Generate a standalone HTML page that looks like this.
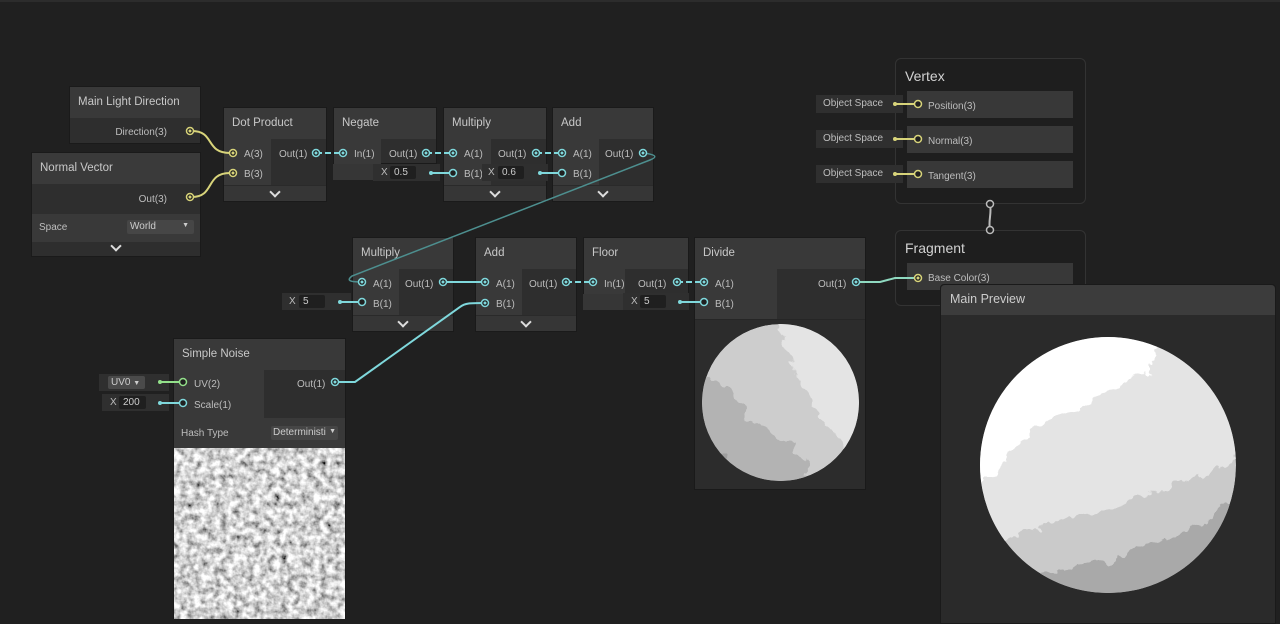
<!DOCTYPE html>
<html><head><meta charset="utf-8">
<style>
*{margin:0;padding:0;box-sizing:border-box}
body{width:1280px;height:621px;background:#202020;overflow:hidden;position:relative;font-family:"Liberation Sans",sans-serif;color:#c4c4c4}
.a{position:absolute}
.n{position:absolute;background:#2e2e2e;border:1px solid #1a1a1a}
.h{position:absolute;left:0;right:0;top:0;height:31px;background:#393939;font-size:11.5px;color:#c8c8c8;padding:9px 0 0 8px}
.ic{position:absolute;background:#393939}
.ft{position:absolute;left:0;right:0;bottom:0;height:16px;background:#363636;border-top:1px solid #2a2a2a}
.t{position:absolute;font-size:10px;color:#bdbdbd;white-space:nowrap}
.ch{position:absolute;width:8px;height:8px;border-right:2px solid #ddd;border-bottom:2px solid #ddd;transform:rotate(45deg)}
.fld{position:absolute;background:#2f2f2f;height:17px;font-size:10px;color:#bbb}
.in{position:absolute;background:#1f1f1f;border-radius:2px;height:13px;top:2px;padding:1px 0 0 4px;color:#ccc}
.slot{position:absolute;background:#383838;font-size:10px;color:#bdbdbd;padding:0 0 0 21px}
</style></head><body>
<div class="a" style="left:0;top:0;width:1280px;height:2px;background:#2c2c2c"></div>

<div class="n" style="left:69px;top:86px;width:132px;height:58px">
 <div class="h">Main Light Direction</div>
 <div class="t" style="right:33px;top:40px">Direction(3)</div>
</div>
<div class="n" style="left:31px;top:152px;width:170px;height:105px">
 <div class="h" style="background:#3a3a3a">Normal Vector</div>
 <div class="t" style="right:33px;top:41px">Out(3)</div>
 <div class="a" style="left:0;right:0;top:61px;height:28px;background:#393939"></div>
 <div class="t" style="left:7px;top:69px">Space</div>
 <div class="a" style="left:95px;top:67px;width:67px;height:14px;background:#464646;border-radius:2px;font-size:10px;padding:1px 0 0 3px;color:#ccc">World<span style="position:absolute;right:5px;top:2px;font-size:7px">▼</span></div>
 <div class="ch" style="left:80px;top:89px"></div>
</div>
<div class="n" style="left:223px;top:107px;width:104px;height:95px">
 <div class="h">Dot Product</div>
 <div class="ic" style="left:0;top:31px;width:47px;height:47px"></div>
 <div class="t" style="left:20px;top:41px">A(3)</div><div class="t" style="left:20px;top:61px">B(3)</div>
 <div class="t" style="left:55px;top:41px">Out(1)</div>
 <div class="ft"></div><div class="ch" style="left:47px;top:80px"></div>
</div>
<div class="n" style="left:333px;top:107px;width:104px;height:57px">
 <div class="h">Negate</div>
 <div class="ic" style="left:0;top:31px;width:47px;height:26px"></div>
 <div class="t" style="left:20px;top:41px">In(1)</div>
 <div class="t" style="left:55px;top:41px">Out(1)</div>
</div>
<div class="a" style="left:333px;top:164px;width:40px;height:16px;background:#363636"></div>
<div class="fld" style="left:373px;top:164px;width:67px"><span class="t" style="left:8px;top:3px">X</span><div class="in" style="left:17px;width:26px">0.5</div></div>
<div class="n" style="left:443px;top:107px;width:104px;height:95px">
 <div class="h">Multiply</div>
 <div class="ic" style="left:0;top:31px;width:47px;height:47px"></div>
 <div class="t" style="left:20px;top:41px">A(1)</div><div class="t" style="left:20px;top:61px">B(1)</div>
 <div class="t" style="left:54px;top:41px">Out(1)</div>
 <div class="ft"></div><div class="ch" style="left:47px;top:80px"></div>
</div>
<div class="fld" style="left:482px;top:164px;width:66px"><span class="t" style="left:6px;top:3px">X</span><div class="in" style="left:16px;width:26px">0.6</div></div>
<div class="n" style="left:552px;top:107px;width:102px;height:95px">
 <div class="h">Add</div>
 <div class="ic" style="left:0;top:31px;width:46px;height:47px"></div>
 <div class="t" style="left:20px;top:41px">A(1)</div><div class="t" style="left:20px;top:61px">B(1)</div>
 <div class="t" style="left:52px;top:41px">Out(1)</div>
 <div class="ft"></div><div class="ch" style="left:46px;top:80px"></div>
</div>
<div class="n" style="left:352px;top:237px;width:102px;height:95px">
 <div class="h">Multiply</div>
 <div class="ic" style="left:0;top:31px;width:46px;height:47px"></div>
 <div class="t" style="left:20px;top:41px">A(1)</div><div class="t" style="left:20px;top:61px">B(1)</div>
 <div class="t" style="left:52px;top:41px">Out(1)</div>
 <div class="ft"></div><div class="ch" style="left:46px;top:80px"></div>
</div>
<div class="fld" style="left:282px;top:293px;width:69px"><span class="t" style="left:7px;top:3px">X</span><div class="in" style="left:17px;width:26px">5</div></div>
<div class="n" style="left:475px;top:237px;width:102px;height:95px">
 <div class="h">Add</div>
 <div class="ic" style="left:0;top:31px;width:46px;height:47px"></div>
 <div class="t" style="left:20px;top:41px">A(1)</div><div class="t" style="left:20px;top:61px">B(1)</div>
 <div class="t" style="left:53px;top:41px">Out(1)</div>
 <div class="ft"></div><div class="ch" style="left:46px;top:80px"></div>
</div>
<div class="n" style="left:583px;top:237px;width:106px;height:57px">
 <div class="h">Floor</div>
 <div class="ic" style="left:0;top:31px;width:41px;height:26px"></div>
 <div class="t" style="left:20px;top:41px">In(1)</div>
 <div class="t" style="left:54px;top:41px">Out(1)</div>
</div>
<div class="a" style="left:583px;top:294px;width:40px;height:16px;background:#363636"></div>
<div class="fld" style="left:623px;top:293px;width:66px"><span class="t" style="left:8px;top:3px">X</span><div class="in" style="left:17px;width:26px">5</div></div>
<div class="n" style="left:694px;top:237px;width:172px;height:253px;background:#2c2c2c">
 <div class="h">Divide</div>
 <div class="ic" style="left:0;top:31px;width:82px;height:50px"></div>
 <div class="a" style="left:82px;top:31px;right:0;height:50px;background:#2e2e2e"></div>
 <div class="t" style="left:20px;top:41px">A(1)</div><div class="t" style="left:20px;top:61px">B(1)</div>
 <div class="t" style="left:123px;top:41px">Out(1)</div>
 <div class="a" style="left:0;right:0;top:81px;height:1px;background:#262626"></div>
</div>
<div class="n" style="left:173px;top:338px;width:173px;height:281px">
 <div class="h">Simple Noise</div>
 <div class="ic" style="left:0;top:31px;width:90px;height:48px"></div>
 <div class="t" style="left:20px;top:40px">UV(2)</div><div class="t" style="left:20px;top:61px">Scale(1)</div>
 <div class="t" style="left:123px;top:40px">Out(1)</div>
 <div class="a" style="left:0;right:0;top:79px;height:30px;background:#393939"></div>
 <div class="t" style="left:7px;top:89px">Hash Type</div>
 <div class="a" style="left:97px;top:87px;width:67px;height:14px;background:#464646;border-radius:2px;font-size:10px;padding:1px 0 0 2px;color:#ccc;overflow:hidden;white-space:nowrap">Deterministi<span style="position:absolute;right:2px;top:2px;font-size:7px">▼</span></div>
 <svg class="a" style="left:0;top:109px" width="171" height="171">
  <filter id="nz" x="0" y="0" width="100%" height="100%"><feTurbulence type="fractalNoise" baseFrequency="0.15" numOctaves="3" seed="3"/><feColorMatrix type="matrix" values="1.6 0 0 0 -0.15 1.6 0 0 0 -0.15 1.6 0 0 0 -0.15 0 0 0 0 1"/></filter>
  <rect width="171" height="171" fill="#fff" filter="url(#nz)"/>
 </svg>
</div>
<div class="fld" style="left:99px;top:374px;width:70px"><div class="a" style="left:9px;top:2px;width:37px;height:13px;background:#4a4a4a;border-radius:2px;padding:1px 0 0 3px;color:#ccc">UV0 <span style="font-size:7px">▼</span></div></div>
<div class="fld" style="left:102px;top:394px;width:67px"><span class="t" style="left:8px;top:3px">X</span><div class="in" style="left:17px;width:27px">200</div></div>

<div class="a" style="left:895px;top:58px;width:191px;height:146px;border:1px solid #333;border-radius:6px;background:#1e1e1e"></div>
<div class="a" style="left:905px;top:68px;font-size:14px;color:#d2d2d2">Vertex</div>
<div class="slot" style="left:907px;top:91px;width:166px;height:27px;padding-top:10px">Position(3)</div>
<div class="slot" style="left:907px;top:126px;width:166px;height:27px;padding-top:10px">Normal(3)</div>
<div class="slot" style="left:907px;top:161px;width:166px;height:27px;padding-top:10px">Tangent(3)</div>
<div class="a" style="left:895px;top:230px;width:191px;height:76px;border:1px solid #333;border-radius:6px;background:#1e1e1e"></div>
<div class="a" style="left:905px;top:240px;font-size:14px;color:#d2d2d2">Fragment</div>
<div class="slot" style="left:907px;top:263px;width:166px;height:27px;padding-top:10px">Base Color(3)</div>
<div class="fld" style="left:816px;top:95px;width:87px;height:18px"><span class="t" style="left:7px;top:3px">Object Space</span></div>
<div class="fld" style="left:816px;top:130px;width:87px;height:18px"><span class="t" style="left:7px;top:3px">Object Space</span></div>
<div class="fld" style="left:816px;top:165px;width:87px;height:18px"><span class="t" style="left:7px;top:3px">Object Space</span></div>

<div class="a" style="left:940px;top:284px;width:336px;height:340px;background:#2a2a2a;border:1px solid #1a1a1a;border-radius:4px 4px 0 0">
 <div class="a" style="left:0;right:0;top:0;height:30px;background:#3c3c3c;font-size:12.5px;color:#ccc;padding:7px 0 0 9px;border-radius:4px 4px 0 0">Main Preview</div>
</div>

<svg class="a" style="left:0;top:0" width="1280" height="621">
 <defs>
  <filter id="dp" x="-10%" y="-10%" width="120%" height="120%"><feTurbulence type="fractalNoise" baseFrequency="0.07" numOctaves="3" seed="5"/><feDisplacementMap in="SourceGraphic" scale="18" xChannelSelector="R" yChannelSelector="G"/></filter>
  <clipPath id="c1"><circle cx="1108" cy="465" r="128"/></clipPath>
  <clipPath id="c2"><circle cx="780.5" cy="402.5" r="78.5"/></clipPath>
 </defs>
 <g clip-path="url(#c1)">
  <circle cx="1108" cy="465" r="128" fill="#cacaca"/>
  <g filter="url(#dp)">
   <path d="M950 320 L1270 320 L1270 440 L1190 480 L1100 510 L1030 530 L960 560 L950 560Z" fill="#e4e4e4"/>
   <path d="M950 320 L1170 320 L1150 370 L1090 400 L1030 430 L990 480 L950 480Z" fill="#ffffff"/>
   <path d="M1000 620 L1040 575 L1110 560 L1180 535 L1230 505 L1270 490 L1270 620 Z" fill="#a9a9a9"/>
  </g>
 </g>
 <g clip-path="url(#c2)">
  <circle cx="780.5" cy="402.5" r="78.5" fill="#cdcdcd"/>
  <g filter="url(#dp)">
   <path d="M770 310 L880 310 L880 480 L850 450 L815 410 L795 370 Z" fill="#e4e4e4"/>
   <path d="M690 370 L725 385 L750 420 L795 445 L815 495 L690 495 Z" fill="#b3b3b3"/>
   <path d="M690 440 L725 455 L750 495 L690 495 Z" fill="#9e9e9e"/>
  </g>
 </g>
 <g fill="none" stroke-width="2">
  <path d="M192 131 C215 131 205 153 230 153" stroke="#d8d47a"/>
  <path d="M192 197 C215 197 205 173 230 173" stroke="#d8d47a"/>
  <path d="M316 153 H342" stroke="#7fd8dc" stroke-dasharray="6 3"/>
  <path d="M426 153 H453" stroke="#7fd8dc" stroke-dasharray="6 3"/>
  <path d="M431 173 H453" stroke="#7fd8dc"/>
  <path d="M536 153 H562" stroke="#7fd8dc" stroke-dasharray="6 3"/>
  <path d="M540 173 H562" stroke="#7fd8dc"/>
  <path d="M643 153 C660 155 655 158 650 160 L352 276 C347 280 348 282 362 282" stroke="#4d8f8f" stroke-width="1.5"/>
  <path d="M340 302 H362" stroke="#7fd8dc"/>
  <path d="M443 282 H485" stroke="#7fd8dc"/>
  <path d="M335 382 H355 L460 307 C465 303 470 303 485 303" stroke="#7fd8dc"/>
  <path d="M566 282 H593" stroke="#7fd8dc" stroke-dasharray="6 3"/>
  <path d="M677 282 H704" stroke="#7fd8dc" stroke-dasharray="6 3"/>
  <path d="M680 302 H704" stroke="#7fd8dc"/>
  <path d="M856 282 H880 L895 278 H917" stroke="#8fd9c0"/>
  <path d="M160 382 H183" stroke="#93e08a"/>
  <path d="M160 403 H183" stroke="#7fd8dc"/>
  <path d="M895 104 H918" stroke="#d8d47a"/>
  <path d="M895 139 H918" stroke="#d8d47a"/>
  <path d="M895 174 H918" stroke="#d8d47a"/>
  <path d="M990 204 C992 214 988 220 990 230" stroke="#bbb"/>
 </g>
 <g stroke-width="1.5">
  <g stroke="#d8d47a" fill="#202020">
   <circle cx="190" cy="131" r="3.5"/><circle cx="190" cy="197" r="3.5"/>
   <circle cx="233" cy="153" r="3.5"/><circle cx="233" cy="173" r="3.5"/>
   <circle cx="918" cy="104" r="3.5"/><circle cx="918" cy="139" r="3.5"/><circle cx="918" cy="174" r="3.5"/><circle cx="918" cy="278" r="3.5"/>
  </g>
  <g fill="#d8d47a"><circle cx="190" cy="131" r="1.5"/><circle cx="190" cy="197" r="1.5"/><circle cx="233" cy="153" r="1.5"/><circle cx="233" cy="173" r="1.5"/><circle cx="918" cy="278" r="1.5"/>
   <circle cx="895" cy="104" r="2"/><circle cx="895" cy="139" r="2"/><circle cx="895" cy="174" r="2"/></g>
  <g stroke="#7fd8dc" fill="#202020">
   <circle cx="316" cy="153" r="3.5"/><circle cx="343" cy="153" r="3.5"/><circle cx="426" cy="153" r="3.5"/><circle cx="453" cy="153" r="3.5"/><circle cx="453" cy="173" r="3.5"/>
   <circle cx="536" cy="153" r="3.5"/><circle cx="562" cy="153" r="3.5"/><circle cx="562" cy="173" r="3.5"/><circle cx="643" cy="153" r="3.5"/>
   <circle cx="362" cy="282" r="3.5"/><circle cx="362" cy="302" r="3.5"/><circle cx="443" cy="282" r="3.5"/><circle cx="485" cy="282" r="3.5"/><circle cx="485" cy="303" r="3.5"/>
   <circle cx="566" cy="282" r="3.5"/><circle cx="593" cy="282" r="3.5"/><circle cx="677" cy="282" r="3.5"/><circle cx="704" cy="282" r="3.5"/><circle cx="704" cy="302" r="3.5"/><circle cx="856" cy="282" r="3.5"/>
   <circle cx="335" cy="382" r="3.5"/><circle cx="183" cy="403" r="3.5"/>
  </g>
  <g fill="#7fd8dc"><circle cx="316" cy="153" r="1.5"/><circle cx="343" cy="153" r="1.5"/><circle cx="426" cy="153" r="1.5"/><circle cx="453" cy="153" r="1.5"/><circle cx="536" cy="153" r="1.5"/><circle cx="562" cy="153" r="1.5"/><circle cx="643" cy="153" r="1.5"/>
   <circle cx="362" cy="282" r="1.5"/><circle cx="443" cy="282" r="1.5"/><circle cx="485" cy="282" r="1.5"/><circle cx="485" cy="303" r="1.5"/><circle cx="566" cy="282" r="1.5"/><circle cx="593" cy="282" r="1.5"/><circle cx="677" cy="282" r="1.5"/><circle cx="704" cy="282" r="1.5"/><circle cx="856" cy="282" r="1.5"/><circle cx="335" cy="382" r="1.5"/>
   <circle cx="431" cy="173" r="2"/><circle cx="540" cy="173" r="2"/><circle cx="340" cy="302" r="2"/><circle cx="680" cy="302" r="2"/><circle cx="160" cy="403" r="2"/></g>
  <circle cx="183" cy="382" r="3.5" stroke="#93e08a" fill="#202020"/><circle cx="160" cy="382" r="2" fill="#93e08a"/>
  <circle cx="990" cy="204" r="3.5" stroke="#bbb" fill="#202020"/><circle cx="990" cy="230" r="3.5" stroke="#bbb" fill="#202020"/>
 </g>
</svg>
</body></html>
